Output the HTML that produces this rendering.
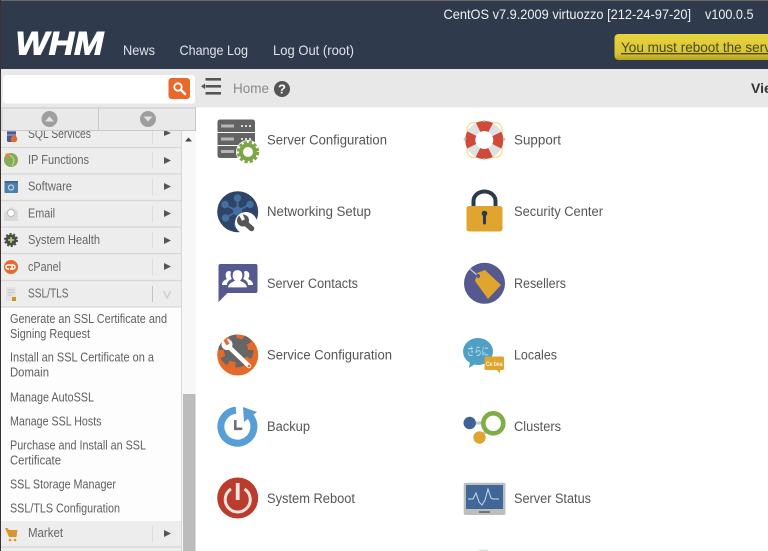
<!DOCTYPE html>
<html lang="en">
<head>
<meta charset="utf-8">
<title>WHM</title>
<style>
html,body{margin:0;padding:0;background:#fff;width:768px;height:551px;overflow:hidden}
svg{display:block}
text{font-family:"Liberation Sans",sans-serif;white-space:pre}
.m{font-size:13px;fill:#666}
.s{font-size:12.5px;fill:#5f5f5f}
.c{font-size:13.5px;fill:#555}
.h{font-size:14px;fill:#dfe3e8}
</style>
</head>
<body>
<svg xmlns="http://www.w3.org/2000/svg" width="768" height="551" viewBox="0 0 768 551">
<defs>
<linearGradient id="y" x1="0" y1="0" x2="0" y2="1"><stop offset="0" stop-color="#e6d43e"/><stop offset=".75" stop-color="#d8c535"/><stop offset="1" stop-color="#b4a122"/></linearGradient>
<clipPath id="sc"><circle cx="237.700" cy="355" r="20.500"/></clipPath>
</defs>
<rect width="768" height="551" fill="#fff"/>
<!-- header -->
<rect width="768" height="69" fill="#2f3b4c"/>
<rect width="768" height="1" fill="#6a6660"/>
<text x="15.500" y="54.500" font-size="32" font-weight="bold" font-style="italic" fill="#fff" stroke="#fff" stroke-width="1" textLength="88" lengthAdjust="spacingAndGlyphs">WHM</text>
<text class="h" x="123" y="55" textLength="32" lengthAdjust="spacingAndGlyphs">News</text>
<text class="h" x="179.500" y="55" textLength="68.500" lengthAdjust="spacingAndGlyphs">Change Log</text>
<text class="h" x="273" y="55" textLength="81" lengthAdjust="spacingAndGlyphs">Log Out (root)</text>
<text class="h" x="443.500" y="19" style="fill:#eef0f2" textLength="247.500" lengthAdjust="spacingAndGlyphs">CentOS v7.9.2009 virtuozzo [212-24-97-20]</text>
<text class="h" x="705" y="19" style="fill:#eef0f2" textLength="48.500" lengthAdjust="spacingAndGlyphs">v100.0.5</text>
<rect x="614.500" y="34" width="170" height="26" rx="4" fill="url(#y)"/>
<text x="621" y="52" font-size="14" fill="#4d4718" text-decoration="underline" textLength="150" lengthAdjust="spacingAndGlyphs">You must reboot the serv</text>

<!-- toolbar -->
<rect y="69" width="768" height="38.500" fill="#e8e8e8"/>
<rect x="3" y="75" width="192" height="28.500" rx="3" fill="#fff"/>
<rect x="168.500" y="78" width="21.500" height="21" rx="3" fill="#e8692b"/>
<circle cx="178" cy="87" r="3.700" fill="none" stroke="#fff" stroke-width="1.800"/>
<path d="M181 90l4 4" stroke="#fff" stroke-width="2.400" stroke-linecap="round"/>
<rect x="205.500" y="78" width="15.500" height="2.600" fill="#555"/>
<rect x="205.500" y="85" width="15.500" height="2.600" fill="#555"/>
<rect x="205.500" y="92" width="15.500" height="2.600" fill="#555"/>
<path d="M201 86.300l4-2.800v5.600z" fill="#555"/>
<text x="233" y="93" font-size="14" fill="#8a8a8a" textLength="36" lengthAdjust="spacingAndGlyphs">Home</text>
<circle cx="282" cy="89" r="8" fill="#555"/>
<text x="282" y="93.500" font-size="13" font-weight="bold" fill="#fff" text-anchor="middle">?</text>
<text x="751" y="93" font-size="14" font-weight="bold" fill="#333">Vie</text>

<!-- sidebar bg -->
<rect x="1" y="107.500" width="180" height="444" fill="#ededed"/>
<rect x="181" y="107.500" width="1" height="444" fill="#d8d8d8"/>
<rect x="182" y="107.500" width="14" height="444" fill="#f7f7f7"/>
<path d="M185 141.500l3.500-4 3.500 4z" fill="#444"/>
<rect x="183" y="394" width="12.500" height="157" fill="#bcbcbc"/>

<!-- rows -->
<g stroke="#d6d6d6" stroke-width="1.200">
<path d="M1 147.500h180M1 174h180M1 200.500h180M1 227h180M1 253.500h180M1 280.500h180M1 307h180M1 547h180"/>
</g>
<rect x="1" y="307.500" width="180" height="213.500" fill="#fdfdfd"/>
<g stroke="#dcdcdc" stroke-width="1">
<path d="M152.500 131v13M152.500 152v16M152.500 179v16M152.500 206v16M152.500 232v16M152.500 259v16M152.500 526v16"/>
</g>
<path d="M152.500 286v16" stroke="#c4c4c4" stroke-width="1"/>
<g fill="#555">
<path d="M164 130v6l7-3z"/><path d="M164 157v7l7-3.500z"/><path d="M164 183v7l7-3.500z"/><path d="M164 210v7l7-3.500z"/><path d="M164 237v7l7-3.500z"/><path d="M164 263v7l7-3.500z"/><path d="M164 530v7l7-3.500z"/>
</g>
<path d="M163.500 291l3.500 7 3.500-7" fill="none" stroke="#cfcfcf" stroke-width="1.400"/>

<text class="m" x="28" y="138" textLength="63" lengthAdjust="spacingAndGlyphs">SQL Services</text>
<text class="m" x="28" y="164" textLength="61" lengthAdjust="spacingAndGlyphs">IP Functions</text>
<text class="m" x="28" y="190.500" textLength="44" lengthAdjust="spacingAndGlyphs">Software</text>
<text class="m" x="28" y="217.500" textLength="27" lengthAdjust="spacingAndGlyphs">Email</text>
<text class="m" x="28" y="244" textLength="72" lengthAdjust="spacingAndGlyphs">System Health</text>
<text class="m" x="28" y="271" textLength="33" lengthAdjust="spacingAndGlyphs">cPanel</text>
<text class="m" x="28" y="297.500" textLength="40.500" lengthAdjust="spacingAndGlyphs">SSL/TLS</text>
<text class="m" x="28" y="537" textLength="35" lengthAdjust="spacingAndGlyphs">Market</text>

<text class="s" x="10" y="323" textLength="157" lengthAdjust="spacingAndGlyphs">Generate an SSL Certificate and</text>
<text class="s" x="10" y="338" textLength="80" lengthAdjust="spacingAndGlyphs">Signing Request</text>
<text class="s" x="10" y="361.500" textLength="144" lengthAdjust="spacingAndGlyphs">Install an SSL Certificate on a</text>
<text class="s" x="10" y="376.500" textLength="39" lengthAdjust="spacingAndGlyphs">Domain</text>
<text class="s" x="10" y="401.500" textLength="84" lengthAdjust="spacingAndGlyphs">Manage AutoSSL</text>
<text class="s" x="10" y="425.500" textLength="91.500" lengthAdjust="spacingAndGlyphs">Manage SSL Hosts</text>
<text class="s" x="10" y="449.500" textLength="136" lengthAdjust="spacingAndGlyphs">Purchase and Install an SSL</text>
<text class="s" x="10" y="464.500" textLength="51" lengthAdjust="spacingAndGlyphs">Certificate</text>
<text class="s" x="10" y="488.500" textLength="106" lengthAdjust="spacingAndGlyphs">SSL Storage Manager</text>
<text class="s" x="10" y="512.500" textLength="110" lengthAdjust="spacingAndGlyphs">SSL/TLS Configuration</text>

<!-- sidebar icons -->
<rect x="7" y="128" width="9" height="14" rx="1.500" fill="#4d5a96"/>
<path d="M7 131h9M7 135h9" stroke="#cfd2e4" stroke-width=".8"/>
<circle cx="14" cy="139" r="3.300" fill="#e8692b"/>
<circle cx="11" cy="160" r="7" fill="#86ad56"/>
<path d="M9 155c3 1 5 3 5 6s-2 4-2 5" stroke="#c9dcae" stroke-width="1" fill="none"/>
<circle cx="7.500" cy="155.500" r="2.300" fill="#e08a3a"/>
<rect x="4.500" y="181" width="13.500" height="12" rx="1" fill="#4d7faa"/>
<circle cx="11" cy="187.500" r="2.500" fill="none" stroke="#bcd2e4" stroke-width="1.300"/>
<rect x="4.500" y="181" width="13.500" height="2" fill="#3d6a92"/>
<path d="M4 221v-8l7-6 7 4v10z" fill="#dadada"/>
<circle cx="11" cy="213" r="3.500" fill="#fff" stroke="#bbb" stroke-width="1"/>
<circle cx="11" cy="240" r="5.500" fill="#4a4a4a"/>
<circle cx="11" cy="240" r="6" fill="none" stroke="#4a4a4a" stroke-width="2" stroke-dasharray="2 1.800"/>
<path d="M8.200 240h5.600M11 237.200v5.600" stroke="#9ccf6a" stroke-width="2"/>
<circle cx="11" cy="267" r="7" fill="#e8692b"/>
<path d="M11 265h-3a2 2 0 0 0 0 4h1M10 269h3a2 2 0 0 0 0-4h-1v4" fill="none" stroke="#fff" stroke-width="1.500"/>
<rect x="6" y="287" width="10" height="14" fill="#e4e4e4"/>
<path d="M7.500 290h7M7.500 292.500h7M7.500 295h4" stroke="#bbb" stroke-width=".8"/>
<rect x="12" y="297" width="4" height="4" fill="#c99a1e"/>
<path d="M5 528h2.500l1.500 2h8.500l-1 7h-7.500z" fill="#d9952b"/>
<circle cx="10" cy="540" r="1.300" fill="#d9952b"/><circle cx="15" cy="540" r="1.300" fill="#d9952b"/>

<!-- up/down -->
<rect x="2" y="108" width="96.500" height="22.500" fill="#e9e9e9" stroke="#c9c9c9"/>
<rect x="98.500" y="108" width="97" height="22.500" fill="#e9e9e9" stroke="#c9c9c9"/>
<circle cx="49.500" cy="119" r="8" fill="#9e9e9e"/>
<path d="M45 121.500h9l-4.500-5z" fill="#e4e4e4"/>
<circle cx="148" cy="119" r="8" fill="#9e9e9e"/>
<path d="M143.500 116.500h9l-4.500 5z" fill="#e4e4e4"/>

<!-- left strip -->
<rect x="0" y="0" width="1" height="551" fill="#3c3030"/>

<!-- server config -->
<g>
<rect x="217.500" y="119.500" width="37.500" height="38.500" rx="2.500" fill="#636363"/>
<path d="M217.500 132.500h37.500M217.500 145.500h37.500" stroke="#fff" stroke-width="1"/>
<rect x="221" y="124.500" width="13" height="3" fill="#b5b5b5"/><rect x="221" y="137.500" width="13" height="3" fill="#b5b5b5"/><rect x="221" y="150" width="13" height="3" fill="#b5b5b5"/>
<path d="M241 126h10M241 139h10" stroke="#ddd" stroke-width="2" stroke-dasharray="2 2"/>
<circle cx="248" cy="152" r="12" fill="#fff"/>
<circle cx="248" cy="152" r="7" fill="#fff" stroke="#7da546" stroke-width="4"/>
<circle cx="248" cy="152" r="10" fill="none" stroke="#7da546" stroke-width="2.500" stroke-dasharray="3.200 2.100"/>
</g>
<!-- network -->
<circle cx="237.700" cy="211.700" r="20.500" fill="#2f4568"/>
<g stroke="#44709f" stroke-width="1.800">
<path d="M237.500 211l0-14M237.500 211l-12-6M237.500 211l11-6M237.500 211l-12 7M237.500 211l0 13"/>
</g>
<g fill="#44709f">
<circle cx="237.500" cy="198" r="3.700"/><circle cx="225" cy="204.500" r="3.700"/><circle cx="250" cy="204.500" r="3.700"/><circle cx="225.500" cy="218" r="3.700"/><circle cx="237.500" cy="224.500" r="3.700"/><circle cx="237.500" cy="211" r="4.500"/>
</g>
<circle cx="246" cy="223" r="11" fill="#fff"/>
<path d="M243 221l8.500 7.500" stroke="#555" stroke-width="5.500" stroke-linecap="round"/>
<circle cx="243" cy="220.500" r="6" fill="#555"/>
<path d="M241 215l2.500 5" stroke="#fff" stroke-width="3.500"/>
<!-- contacts -->
<path d="M220 264h35.500a2 2 0 0 1 2 2v25a2 2 0 0 1-2 2h-28l-9 9v-36a2 2 0 0 1 2-2z" fill="#55598f"/>
<g fill="#fff">
<path d="M222 285c0-4 3-5 5-6 -2-2-2-8 2-8 1 0 1 0 2 1-1 3 0 6 1 7-3 1-5 3-5 6z"/>
<path d="M253 285c0-4-3-5-5-6 2-2 2-8-2-8-1 0-1 0-2 1 1 3 0 6-1 7 3 1 5 3 5 6z"/>
<path d="M227.500 288c0-5 4-6 6.500-7.500-3-2.500-3-11 3.500-11s6.500 8.500 3.500 11c2.500 1.500 6.500 2.500 6.500 7.500z" stroke="#55598f" stroke-width="1.200"/>
</g>
<!-- service config -->
<circle cx="237.700" cy="355" r="20.500" fill="#e4692b"/>
<g clip-path="url(#sc)">
<circle cx="236" cy="350" r="12" fill="#666"/>
<circle cx="236" cy="350" r="14.500" fill="none" stroke="#666" stroke-width="6" stroke-dasharray="8 7.200"/>
</g>
<path d="M228 346l21 20" stroke="#fff" stroke-width="4.500" stroke-linecap="round"/>
<circle cx="227" cy="344.500" r="5.500" fill="#fff"/>
<path d="M225 339.500l3 5" stroke="#e4692b" stroke-width="3.500"/>
<circle cx="249" cy="366" r="1.300" fill="#e4692b"/>
<!-- backup -->
<path d="M236 410.200A16.500 16.500 0 1 0 250 416" fill="none" stroke="#589dd6" stroke-width="7"/>
<path d="M243 407l14 5-13 10z" fill="#589dd6"/>
<path d="M235.300 420v8.800h7" fill="none" stroke="#707070" stroke-width="2.600"/>
<!-- reboot -->
<circle cx="237.700" cy="498" r="20.500" fill="#b93c2c"/>
<path d="M231 489a12.500 12.500 0 1 0 13.500 0" fill="none" stroke="#f5e4e0" stroke-width="3"/>
<rect x="235.800" y="483" width="3.800" height="17" fill="#f5e4e0"/>

<!-- support -->
<rect x="467" y="122.500" width="35" height="35" rx="7" fill="none" stroke="#f3e39a" stroke-width="1.500"/>
<circle cx="484.300" cy="140" r="14" fill="#fff" stroke="#dfe1e2" stroke-width="10"/>
<circle cx="484.300" cy="140" r="14" fill="none" stroke="#cf4a38" stroke-width="10" stroke-dasharray="13 9" stroke-dashoffset="6.500"/>
<path d="M464 140l2-2M505 140l-2-2M484.300 120v2M484.300 160v-2" stroke="#bbb" stroke-width="2"/>
<!-- lock -->
<path d="M473.500 207v-6a11 9.500 0 0 1 22 0v6" fill="none" stroke="#2c3b4c" stroke-width="4"/>
<rect x="466.500" y="206" width="36" height="25.500" rx="2.500" fill="#e0a52f"/>
<circle cx="484.500" cy="213.500" r="2.800" fill="#2c3b4c"/>
<path d="M483 214h3v9a1.500 1.500 0 0 1-3 0z" fill="#2c3b4c"/>
<!-- resellers -->
<circle cx="484.500" cy="283.300" r="20.500" fill="#55598f"/>
<path d="M477 273l8-3 16 15-13 14-13-18z" fill="#e0a52f"/>
<path d="M470 269l8 7" stroke="#c9c9d6" stroke-width="1.200"/>
<circle cx="478" cy="276" r="2" fill="#55598f"/>
<!-- locales -->
<ellipse cx="478" cy="351.500" rx="15" ry="13.500" fill="#4fa0c4"/>
<path d="M470 362l-1 6 6-4z" fill="#4fa0c4"/>
<text x="467" y="355" font-size="11" fill="#cfe6ef" style="font-family:'Noto Sans CJK JP',sans-serif" textLength="22" lengthAdjust="spacingAndGlyphs">さらに</text>
<rect x="484.500" y="356.500" width="19.500" height="13.500" rx="1.500" fill="#e0a52f"/>
<path d="M497 370l2.500 3.500 1-3.500z" fill="#e0a52f"/>
<text x="486" y="366" font-size="6.500" font-weight="bold" fill="#fdf3d8" textLength="16.500" lengthAdjust="spacingAndGlyphs">Ce bea</text>
<!-- clusters -->
<path d="M472 423h12M480 436l7-5" stroke="#c5c5c5" stroke-width="3"/>
<circle cx="469.700" cy="423" r="6.200" fill="#3e6296"/>
<circle cx="479.500" cy="437.500" r="6.200" fill="#e0a52f"/>
<circle cx="493.300" cy="423.300" r="10" fill="#fff" stroke="#7fae48" stroke-width="4.600"/>
<!-- status -->
<rect x="463.700" y="482.700" width="41.800" height="32.300" rx="2" fill="#bdbdbd"/>
<rect x="466" y="485" width="37" height="24" fill="#3f6899"/>
<path d="M468 499h5l3-6 3 9 3 3 3-5 3-11 3 9 2 1h6" fill="none" stroke="#cfdcea" stroke-width="1"/>
<rect x="479" y="511" width="11" height="2" fill="#757575"/>

<!-- main labels -->
<text class="c" x="267" y="144.500" textLength="120" lengthAdjust="spacingAndGlyphs">Server Configuration</text>
<text class="c" x="267" y="216" textLength="104" lengthAdjust="spacingAndGlyphs">Networking Setup</text>
<text class="c" x="267" y="288" textLength="91" lengthAdjust="spacingAndGlyphs">Server Contacts</text>
<text class="c" x="267" y="359.500" textLength="125" lengthAdjust="spacingAndGlyphs">Service Configuration</text>
<text class="c" x="267" y="431" textLength="43" lengthAdjust="spacingAndGlyphs">Backup</text>
<text class="c" x="267" y="503" textLength="88" lengthAdjust="spacingAndGlyphs">System Reboot</text>
<text class="c" x="514" y="144.500" textLength="47" lengthAdjust="spacingAndGlyphs">Support</text>
<text class="c" x="514" y="216" textLength="89" lengthAdjust="spacingAndGlyphs">Security Center</text>
<text class="c" x="514" y="288" textLength="52" lengthAdjust="spacingAndGlyphs">Resellers</text>
<text class="c" x="514" y="359.500" textLength="43" lengthAdjust="spacingAndGlyphs">Locales</text>
<text class="c" x="514" y="431" textLength="47" lengthAdjust="spacingAndGlyphs">Clusters</text>
<text class="c" x="514" y="503" textLength="77" lengthAdjust="spacingAndGlyphs">Server Status</text>
<ellipse cx="483" cy="550.500" rx="5" ry="1" fill="#ddd"/>
</svg>
</body>
</html>
